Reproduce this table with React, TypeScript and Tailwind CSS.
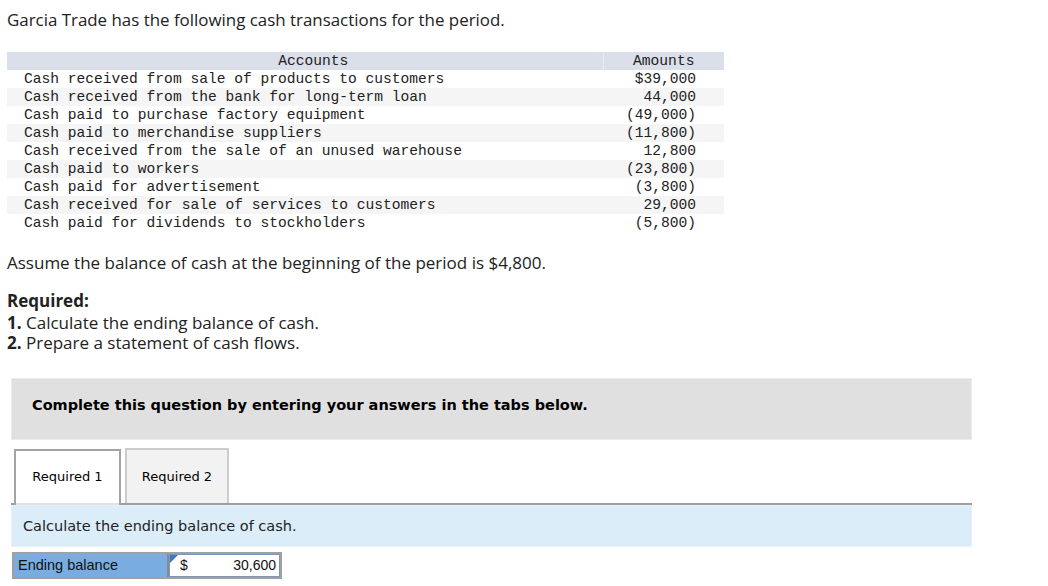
import React from "react";

const rows: [string, string][] = [
  ["Cash received from sale of products to customers", "$39,000"],
  ["Cash received from the bank for long-term loan", "44,000"],
  ["Cash paid to purchase factory equipment", "(49,000)"],
  ["Cash paid to merchandise suppliers", "(11,800)"],
  ["Cash received from the sale of an unused warehouse", "12,800"],
  ["Cash paid to workers", "(23,800)"],
  ["Cash paid for advertisement", "(3,800)"],
  ["Cash received for sale of services to customers", "29,000"],
  ["Cash paid for dividends to stockholders", "(5,800)"],
];

export default function App() {
  return (
    <div className="w-[1048px] h-[586px] overflow-hidden bg-white pl-[7px] pt-[10px] text-[#222]" style={{ fontFamily: "'Open Sans', 'Liberation Sans', sans-serif" }}>
      <p className="text-[16.9px] leading-[20px]">Garcia Trade has the following cash transactions for the period.</p>

      <table className="mt-[22px] w-[717px] border-collapse text-[14.6px] leading-[18px] text-[#222]" style={{ fontFamily: "'Liberation Mono', monospace" }}>
        <thead>
          <tr className="bg-[#dadfe9] h-[18px]">
            <th className="font-normal text-center w-[596px] border-r border-[#e8ebf1] pl-[17px]">Accounts</th>
            <th className="font-normal text-center">Amounts</th>
          </tr>
        </thead>
        <tbody>
          {rows.map(([a, v], i) => (
            <tr key={i} className={`h-[18px] ${i % 2 === 1 ? "bg-[#f5f5f5]" : "bg-white"}`}>
              <td className="pl-[17px] whitespace-pre">{a}</td>
              <td className="text-right pr-[28px] whitespace-pre">{v}</td>
            </tr>
          ))}
        </tbody>
      </table>

      <p className="mt-[21px] text-[17px] leading-[20px]">Assume the balance of cash at the beginning of the period is $4,800.</p>

      <div className="mt-[18px] text-[17px] leading-[20px]">
        <p className="font-bold">Required:</p>
        <p className="mt-[2px]"><span className="font-bold">1.</span> Calculate the ending balance of cash.</p>
        <p><span className="font-bold">2.</span> Prepare a statement of cash flows.</p>
      </div>

      <div className="mt-[25px] ml-[4px] w-[961px]" style={{ fontFamily: "'DejaVu Sans', Verdana, sans-serif" }}>
        <div className="h-[62px] bg-[#e0e0e0] border border-[#ebebeb] flex items-center pl-[20px] pb-[6px]">
          <span className="font-bold text-[14.5px] text-black">Complete this question by entering your answers in the tabs below.</span>
        </div>

        <div className="mt-[9px] flex items-end border-b-2 border-[#9e9e9e] h-[56px]">
          <div className="ml-[3px] h-[56px] w-[107px] bg-white border-2 border-b-0 border-[#a3a3a3] -mb-[2px] pb-[2px] flex items-center justify-center text-[13px] text-black relative">
            Required 1
            <div className="absolute left-0 right-0 bottom-0 h-[2px] bg-[#e2e2e2]" />
          </div>
          <div className="ml-[4px] h-[55px] w-[104px] bg-[#f2f2f2] border-2 border-b-0 border-[#cccccc] flex items-center justify-center text-[13px] text-black">
            Required 2
          </div>
        </div>

        <div className="h-[42px] bg-[#dcedfa] border border-[#e6f1fb] flex items-center pl-[11px] pt-[2px]">
          <span className="text-[14.5px] text-[#222]">Calculate the ending balance of cash.</span>
        </div>

        <div className="mt-[5px] ml-[1px] flex h-[27px] w-[270px] border-2 border-[#a0a0a0]" style={{ fontFamily: "'Liberation Sans', Arial, sans-serif" }}>
          <div className="w-[155px] bg-[#79ade1] border-r-2 border-[#8a8a8a] flex items-center pl-[4px] text-[14.5px] text-[#111]">Ending balance</div>
          <div className="flex-1 relative bg-white border border-[#7a96b8] flex items-center justify-between pl-[10px] pr-[3px] text-[14px] text-[#111]">
            <div className="absolute left-0 top-0 w-0 h-0 border-t-[8px] border-r-[8px] border-t-[#3a78c9] border-r-transparent" />
            <span>$</span>
            <span>30,600</span>
          </div>
        </div>
      </div>
    </div>
  );
}
